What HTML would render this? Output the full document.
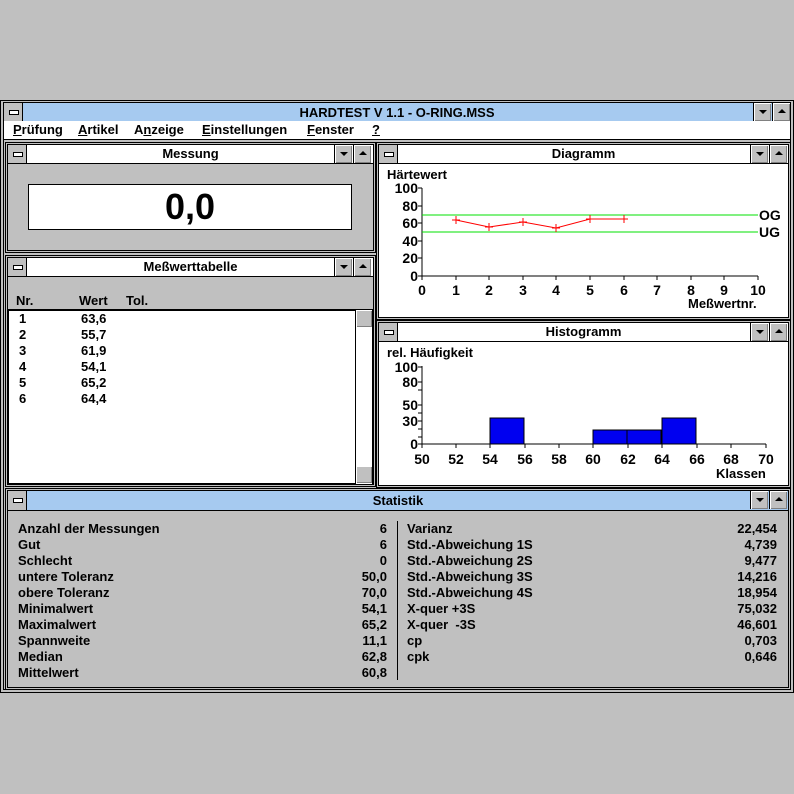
<!DOCTYPE html>
<html><head><meta charset="utf-8"><style>
*{margin:0;padding:0;box-sizing:border-box}
body{width:794px;height:794px;background:#c0c0c0;position:relative;overflow:hidden;font-family:"Liberation Sans",sans-serif;font-weight:bold;font-size:13px;color:#000}
.a{position:absolute}
.tb{position:absolute;border:1px solid #000;background:#fff;text-align:center;line-height:17px;font-size:13px}
.btn{position:absolute;width:18px;height:18px;background:#c0c0c0;border-left:1px solid #000;box-shadow:inset 1px 1px 0 #fff,inset -1px -1px 0 #808080}
.sys{position:absolute;width:19px;height:18px;background:#c0c0c0;border-right:1px solid #000}
.sys:after{content:"";position:absolute;left:5px;top:7px;width:8px;height:3px;border:1px solid #000;background:#fff}
.dn:after,.up:after{content:"";position:absolute;left:5px;border-left:4px solid transparent;border-right:4px solid transparent}
.dn:after{top:7px;border-top:4px solid #000}
.up:after{top:6px;border-bottom:4px solid #000}
.row{position:absolute;left:18px;width:369px;height:16px;line-height:16px}
.row span{position:absolute;right:0}
.row2{position:absolute;left:407px;width:370px;height:16px;line-height:16px}
.row2 span{position:absolute;right:0}
.m{position:absolute;top:0;line-height:18px}
</style></head><body>
<div class="a" style="left:0;top:100px;width:794px;height:593px;border:1px solid #000;background:#c0c0c0"></div>
<div class="a" style="left:3px;top:102px;width:788px;height:588px;border:1px solid #000"></div>
<div class="tb" style="left:3px;top:102px;width:788px;height:20px;background:#a6caf0;line-height:19px">HARDTEST V 1.1 - O-RING.MSS</div>
<div class="sys" style="left:4px;top:103px;height:18px"></div>
<div class="btn dn" style="left:753px;top:103px"></div>
<div class="btn up" style="left:772px;top:103px"></div>
<div class="a" style="left:4px;top:121px;width:786px;height:19px;background:#fff;border-bottom:1px solid #000">
<span class="m" style="left:9px"><u>P</u>rüfung</span>
<span class="m" style="left:74px"><u>A</u>rtikel</span>
<span class="m" style="left:130px">A<u>n</u>zeige</span>
<span class="m" style="left:198px"><u>E</u>instellungen</span>
<span class="m" style="left:303px"><u>F</u>enster</span>
<span class="m" style="left:368px"><u>?</u></span>
</div>

<div class="a" style="left:5px;top:142px;width:371px;height:111px;border:1px solid #000"></div>
<div class="a" style="left:7px;top:144px;width:367px;height:107px;border:1px solid #000;background:#c0c0c0"></div>
<div class="tb" style="left:7px;top:144px;width:367px;height:20px">Messung</div>
<div class="sys" style="left:8px;top:145px"></div>
<div class="btn dn" style="left:334px;top:145px"></div>
<div class="btn up" style="left:353px;top:145px"></div>
<div class="a" style="left:28px;top:184px;width:324px;height:46px;background:#fff;border:1px solid #000;text-align:center;font-size:36px;line-height:44px">0,0</div>

<div class="a" style="left:5px;top:255px;width:371px;height:232px;border:1px solid #000"></div>
<div class="a" style="left:7px;top:257px;width:367px;height:228px;border:1px solid #000;background:#c0c0c0"></div>
<div class="tb" style="left:7px;top:257px;width:367px;height:20px">Meßwerttabelle</div>
<div class="sys" style="left:8px;top:258px"></div>
<div class="btn dn" style="left:334px;top:258px"></div>
<div class="btn up" style="left:353px;top:258px"></div>
<div class="a" style="left:16px;top:293px">Nr.</div>
<div class="a" style="left:79px;top:293px">Wert</div>
<div class="a" style="left:126px;top:293px">Tol.</div>
<div class="a" style="left:7px;top:309px;width:367px;height:176px;background:#fff;border:2px solid #000"></div>
<div class="a" style="left:355px;top:310px;width:17px;height:174px;background:#fff;border-left:1px solid #000"></div>
<div class="btn" style="left:355px;top:310px;width:17px;height:17px"></div>
<div class="btn" style="left:355px;top:466px;width:17px;height:17px"></div>
<div class="a" style="left:19px;top:311px;line-height:16px">1<br>2<br>3<br>4<br>5<br>6</div>
<div class="a" style="left:81px;top:311px;line-height:16px">63,6<br>55,7<br>61,9<br>54,1<br>65,2<br>64,4</div>

<div class="a" style="left:376px;top:142px;width:415px;height:178px;border:1px solid #000"></div>
<div class="a" style="left:378px;top:144px;width:411px;height:174px;border:1px solid #000;background:#fff"></div>
<div class="tb" style="left:378px;top:144px;width:411px;height:20px">Diagramm</div>
<div class="sys" style="left:379px;top:145px"></div>
<div class="btn dn" style="left:750px;top:145px"></div>
<div class="btn up" style="left:769px;top:145px"></div>
<svg class="a" style="left:378px;top:164px" width="411" height="154" font-family="Liberation Sans" font-weight="bold" font-size="14">
<text x="9" y="15" font-size="13">Härtewert</text>
<g stroke="#000" fill="none">
<path d="M44 24V112H380"/>
<path d="M40 24H44M40 42H44M40 59H44M40 77H44M40 94H44M40 112H44"/>
<path d="M44 112v4M78 112v4M111 112v4M145 112v4M178 112v4M212 112v4M246 112v4M279 112v4M313 112v4M346 112v4M380 112v4"/>
</g>
<g text-anchor="end"><text x="40" y="29">100</text><text x="40" y="47">80</text><text x="40" y="64">60</text><text x="40" y="82">40</text><text x="40" y="99">20</text><text x="40" y="117">0</text></g>
<g text-anchor="middle"><text x="44" y="131">0</text><text x="78" y="131">1</text><text x="111" y="131">2</text><text x="145" y="131">3</text><text x="178" y="131">4</text><text x="212" y="131">5</text><text x="246" y="131">6</text><text x="279" y="131">7</text><text x="313" y="131">8</text><text x="346" y="131">9</text><text x="380" y="131">10</text></g>
<text x="310" y="144" font-size="13">Meßwertnr.</text>
<path d="M44 51H380M44 68H380" stroke="#00e000"/>
<text x="381" y="56">OG</text><text x="381" y="73">UG</text>
<path d="M78 56L111 63L145 58L178 64L212 55L246 55" stroke="#f00" fill="none"/>
<path d="M74 56h8M78 52v8M107 63h8M111 59v8M141 58h8M145 54v8M174 64h8M178 60v8M208 55h8M212 51v8M242 55h8M246 51v8" stroke="#f00"/>
</svg>

<div class="a" style="left:376px;top:320px;width:415px;height:168px;border:1px solid #000"></div>
<div class="a" style="left:378px;top:322px;width:411px;height:164px;border:1px solid #000;background:#fff"></div>
<div class="tb" style="left:378px;top:322px;width:411px;height:20px">Histogramm</div>
<div class="sys" style="left:379px;top:323px"></div>
<div class="btn dn" style="left:750px;top:323px"></div>
<div class="btn up" style="left:769px;top:323px"></div>
<svg class="a" style="left:378px;top:342px" width="411" height="144" font-family="Liberation Sans" font-weight="bold" font-size="14">
<text x="9" y="15" font-size="13">rel. Häufigkeit</text>
<g fill="#0000f0" stroke="#000"><rect x="112" y="76" width="34" height="26"/><rect x="215" y="88" width="34" height="14"/><rect x="249" y="88" width="34" height="14"/><rect x="284" y="76" width="34" height="26"/></g>
<g stroke="#000" fill="none">
<path d="M44 24V102H388"/>
<path d="M40 25H44M40 40H44M40 48H44M40 63H44M40 71H44M40 79H44M40 87H44M40 95H44M40 102H44"/>
<path d="M44 102v4M78 102v4M112 102v4M147 102v4M181 102v4M215 102v4M250 102v4M284 102v4M319 102v4M353 102v4M388 102v4"/>
</g>
<g text-anchor="end"><text x="40" y="30">100</text><text x="40" y="45">80</text><text x="40" y="68">50</text><text x="40" y="84">30</text><text x="40" y="107">0</text></g>
<g text-anchor="middle"><text x="44" y="122">50</text><text x="78" y="122">52</text><text x="112" y="122">54</text><text x="147" y="122">56</text><text x="181" y="122">58</text><text x="215" y="122">60</text><text x="250" y="122">62</text><text x="284" y="122">64</text><text x="319" y="122">66</text><text x="353" y="122">68</text><text x="388" y="122">70</text></g>
<text x="338" y="136" font-size="13">Klassen</text>
</svg>

<div class="a" style="left:5px;top:488px;width:786px;height:202px;border:1px solid #000"></div>
<div class="a" style="left:7px;top:490px;width:782px;height:198px;border:1px solid #000;background:#c0c0c0"></div>
<div class="tb" style="left:7px;top:490px;width:782px;height:21px;background:#a6caf0;line-height:20px">Statistik</div>
<div class="sys" style="left:8px;top:491px;height:19px"></div>
<div class="btn dn" style="left:750px;top:491px"></div>
<div class="btn up" style="left:769px;top:491px"></div>
<div class="a" style="left:397px;top:521px;width:1px;height:159px;background:#000"></div>
<div class="row" style="top:521px">Anzahl der Messungen<span>6</span></div>
<div class="row" style="top:537px">Gut<span>6</span></div>
<div class="row" style="top:553px">Schlecht<span>0</span></div>
<div class="row" style="top:569px">untere Toleranz<span>50,0</span></div>
<div class="row" style="top:585px">obere Toleranz<span>70,0</span></div>
<div class="row" style="top:601px">Minimalwert<span>54,1</span></div>
<div class="row" style="top:617px">Maximalwert<span>65,2</span></div>
<div class="row" style="top:633px">Spannweite<span>11,1</span></div>
<div class="row" style="top:649px">Median<span>62,8</span></div>
<div class="row" style="top:665px">Mittelwert<span>60,8</span></div>
<div class="row2" style="top:521px">Varianz<span>22,454</span></div>
<div class="row2" style="top:537px">Std.-Abweichung 1S<span>4,739</span></div>
<div class="row2" style="top:553px">Std.-Abweichung 2S<span>9,477</span></div>
<div class="row2" style="top:569px">Std.-Abweichung 3S<span>14,216</span></div>
<div class="row2" style="top:585px">Std.-Abweichung 4S<span>18,954</span></div>
<div class="row2" style="top:601px">X-quer +3S<span>75,032</span></div>
<div class="row2" style="top:617px">X-quer &nbsp;-3S<span>46,601</span></div>
<div class="row2" style="top:633px">cp<span>0,703</span></div>
<div class="row2" style="top:649px">cpk<span>0,646</span></div>
</body></html>
